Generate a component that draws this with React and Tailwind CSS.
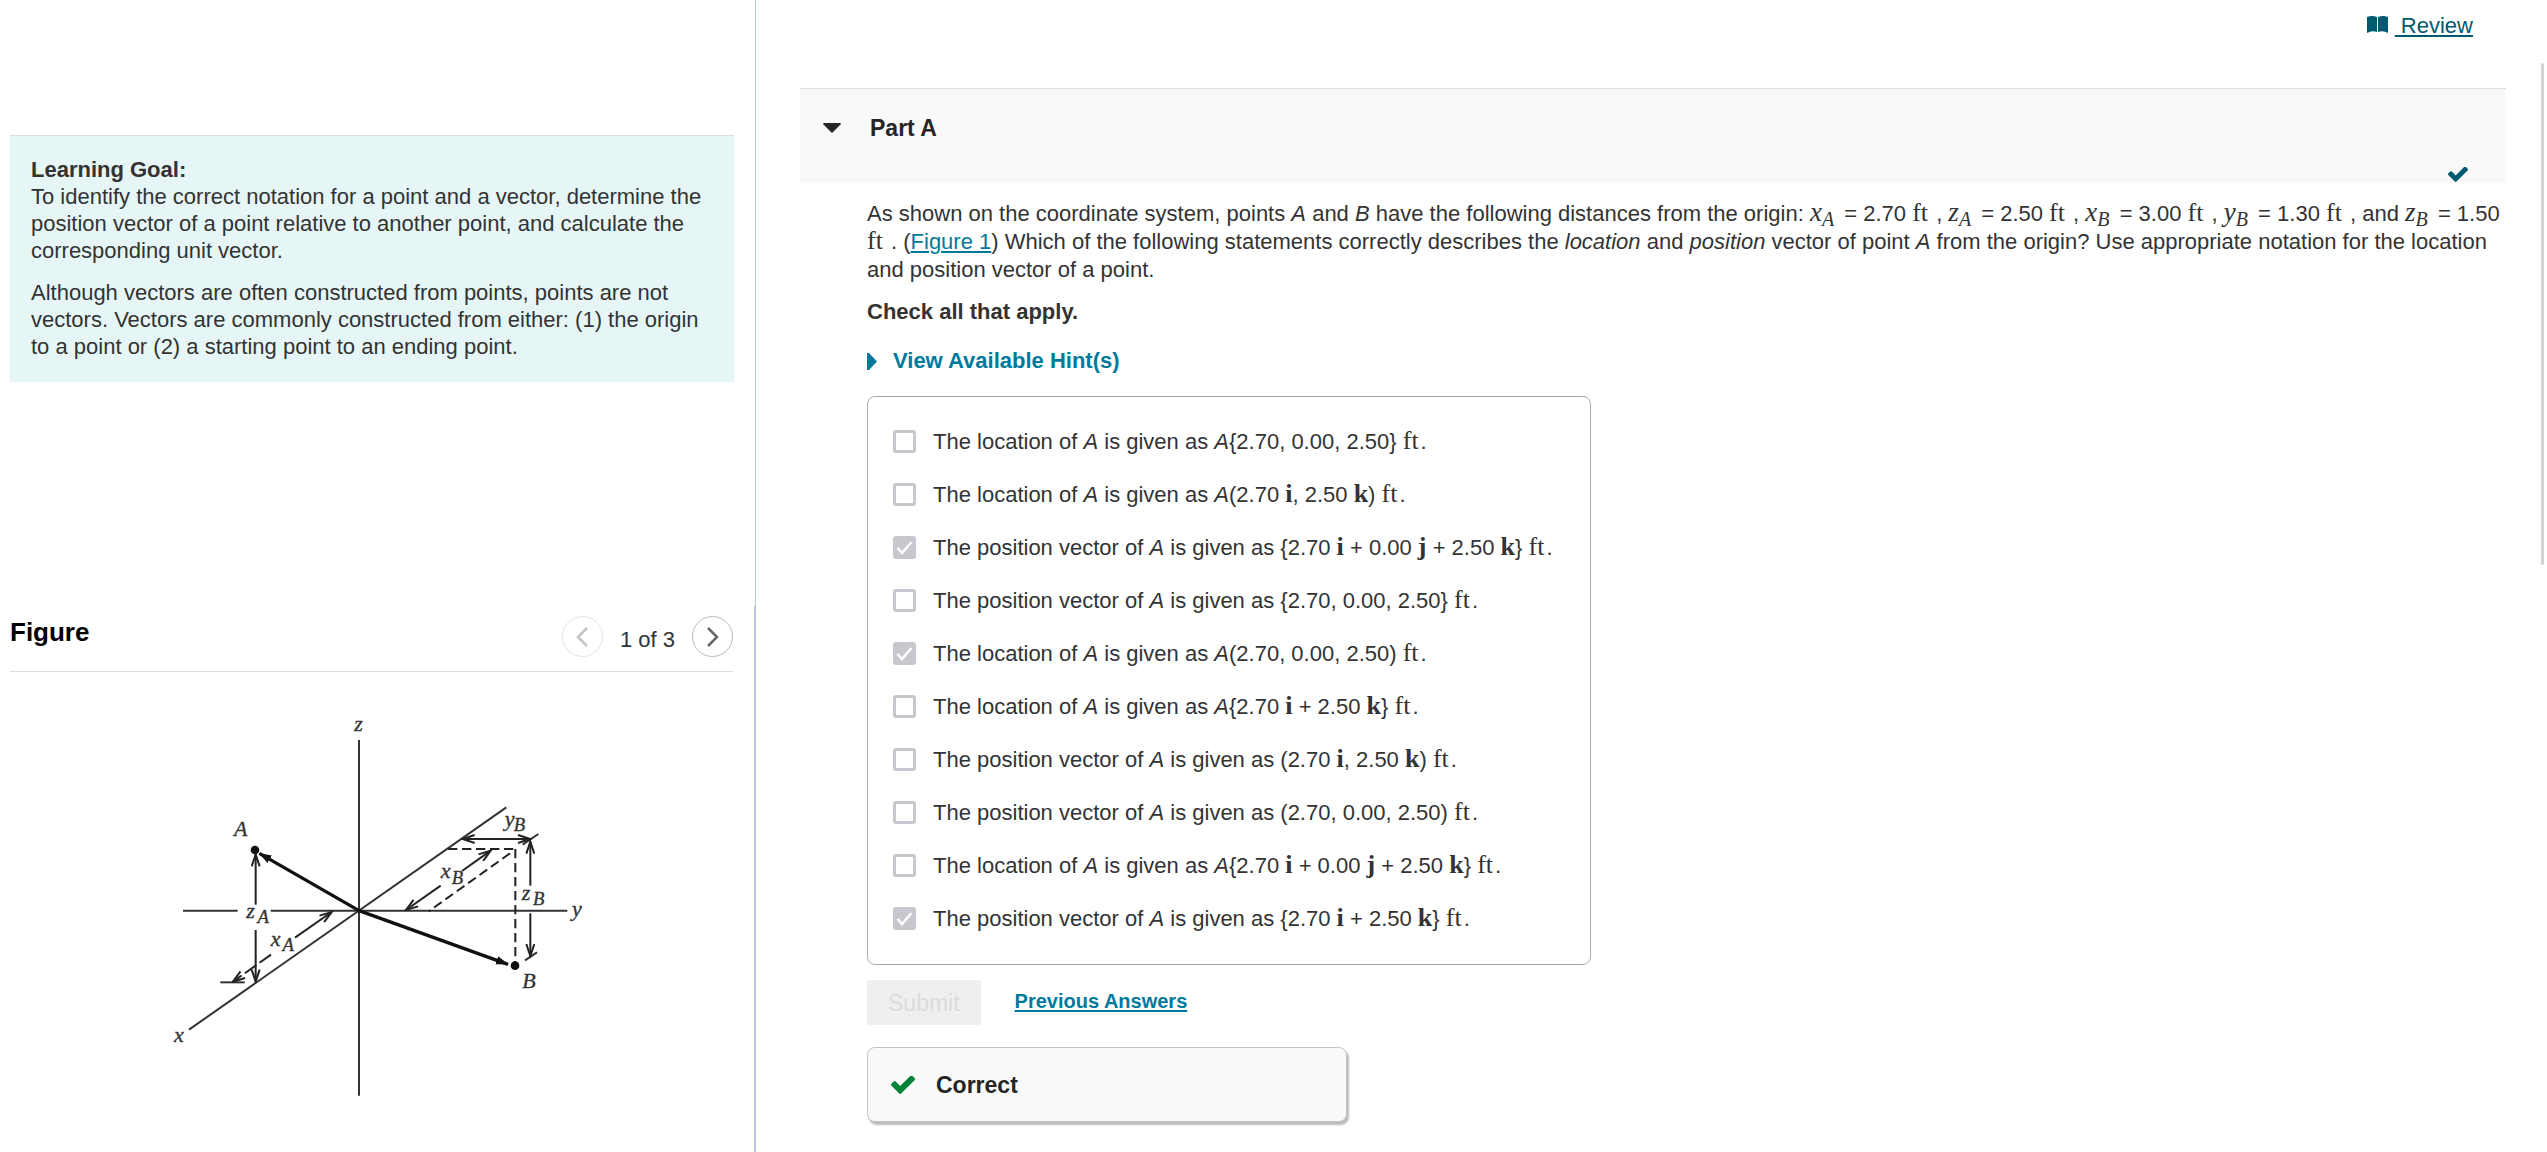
import React, { useState } from 'react';

const A = <i>A</i>;

// Unit and vector symbols are set in a serif face, as in typeset maths
const Ft = () => <span className="font-['Liberation_Serif',serif] text-[26px] leading-none mr-[2px]">ft</span>;

const Vec = ({ children }) => (
  <b className="font-['Liberation_Serif',serif] text-[26px] leading-none">{children}</b>
);

const Var = ({ name, sub }) => (
  <i className="font-['Liberation_Serif',serif] text-[27px] leading-none whitespace-nowrap mr-[4px]">
    {name}
    <sub className="text-[20px] leading-none">{sub}</sub>
  </i>
);

const options = [
  { id: 'a', checked: false, text: <>The location of {A} is given as {A}{'{2.70, 0.00, 2.50}'} <Ft />.</> },
  { id: 'b', checked: false, text: <>The location of {A} is given as {A}(2.70 <Vec>i</Vec>, 2.50 <Vec>k</Vec>) <Ft />.</> },
  { id: 'c', checked: true, text: <>The position vector of {A} is given as {'{'}2.70 <Vec>i</Vec> + 0.00 <Vec>j</Vec> + 2.50 <Vec>k</Vec>{'}'} <Ft />.</> },
  { id: 'd', checked: false, text: <>The position vector of {A} is given as {'{2.70, 0.00, 2.50}'} <Ft />.</> },
  { id: 'e', checked: true, text: <>The location of {A} is given as {A}(2.70, 0.00, 2.50) <Ft />.</> },
  { id: 'f', checked: false, text: <>The location of {A} is given as {A}{'{'}2.70 <Vec>i</Vec> + 2.50 <Vec>k</Vec>{'}'} <Ft />.</> },
  { id: 'g', checked: false, text: <>The position vector of {A} is given as (2.70 <Vec>i</Vec>, 2.50 <Vec>k</Vec>) <Ft />.</> },
  { id: 'h', checked: false, text: <>The position vector of {A} is given as (2.70, 0.00, 2.50) <Ft />.</> },
  { id: 'i', checked: false, text: <>The location of {A} is given as {A}{'{'}2.70 <Vec>i</Vec> + 0.00 <Vec>j</Vec> + 2.50 <Vec>k</Vec>{'}'} <Ft />.</> },
  { id: 'j', checked: true, text: <>The position vector of {A} is given as {'{'}2.70 <Vec>i</Vec> + 2.50 <Vec>k</Vec>{'}'} <Ft />.</> },
];

function CheckMark({ className, label }) {
  return (
    <svg viewBox="121 374 1550 1148" className={className} fill="currentColor" role="img" aria-label={label}>
      <path d="M1671 566q0 40-28 68l-724 724-136 136q-28 28-68 28t-68-28l-136-136-362-362q-28-28-28-68t28-68l136-136q28-28 68-28t68 28l294 295 656-657q28-28 68-28t68 28l136 136q28 28 28 68z" />
    </svg>
  );
}

function CoordinateFigure() {
  return (
    <svg viewBox="-24 0 1320 1230" className="w-[440px] max-w-full mx-auto" role="img" aria-label="Coordinate system with points A and B">
      <defs>
        <marker id="open" markerUnits="userSpaceOnUse" markerWidth="44" markerHeight="30" refX="38" refY="15" orient="auto-start-reverse">
          <path d="M2 3 L38 15 L2 27" fill="none" stroke="#222" strokeWidth="6" />
        </marker>
        <marker id="solid" markerUnits="userSpaceOnUse" markerWidth="40" markerHeight="28" refX="36" refY="14" orient="auto">
          <path d="M0 1 L38 14 L0 27 Z" fill="#111" />
        </marker>
      </defs>

      <g stroke="#333" strokeWidth="6" fill="none">
        <path d="M597 123 V1190" />
        <path d="M69 635 H233 M332 635 H1222" />
        <path d="M87 992 L1039 325" />
        <path d="M181 850 H254" />
        <path d="M1095 784 L1131 760 M1088 437 L1135 405" />
      </g>

      <g stroke="#222" strokeWidth="6" fill="none" strokeDasharray="28 14">
        <path d="M864 450 H1066" />
        <path d="M1066 450 V800" />
        <path d="M1050 463 L806 637" />
      </g>

      <g stroke="#222" strokeWidth="6" fill="none">
        <path d="M287 617 V466" markerEnd="url(#open)" />
        <path d="M287 693 V848" markerEnd="url(#open)" />
        <path d="M405 716 L515 639" markerEnd="url(#open)" />
        <path d="M333 767 L219 848" strokeDasharray="42 12" markerEnd="url(#open)" />
        <path d="M906 516 L992 455" markerEnd="url(#open)" />
        <path d="M842 560 L738 633" markerEnd="url(#open)" />
        <path d="M908 420 H1110" markerStart="url(#open)" markerEnd="url(#open)" />
        <path d="M1111 560 V428" markerEnd="url(#open)" />
        <path d="M1111 643 V771" markerEnd="url(#open)" />
      </g>

      <g stroke="#111" strokeWidth="10" fill="none">
        <path d="M597 635 L298 463" markerEnd="url(#solid)" />
        <path d="M597 635 L1044 796" markerEnd="url(#solid)" />
      </g>
      <circle cx="285" cy="453" r="13" fill="#111" />
      <circle cx="1065" cy="800" r="13" fill="#111" />

      <g className="font-['Liberation_Serif',serif]" fontStyle="italic" fontSize="66" fill="#333" stroke="#333" strokeWidth="1">
        <text x="583" y="95">z</text>
        <text x="222" y="411">A</text>
        <text x="1087" y="867">B</text>
        <text x="1236" y="652">y</text>
        <text x="42" y="1029">x</text>
        <text x="259" y="657">z<tspan dx="8" dy="16" fontSize="56">A</tspan></text>
        <text x="332" y="741">x<tspan dx="6" dy="16" fontSize="56">A</tspan></text>
        <text x="842" y="538">x<tspan dx="4" dy="18" fontSize="56">B</tspan></text>
        <text x="1034" y="380">y<tspan dx="-2" dy="16" fontSize="56">B</tspan></text>
        <text x="1085" y="604">z<tspan dx="8" dy="14" fontSize="56">B</tspan></text>
      </g>
    </svg>
  );
}

function GoalPanel() {
  return (
    <section className="border-r border-[#b7c9dc] pl-[10px] pr-[21px] pt-[135px] pb-[224px]">
      <div className="bg-[#e6f6f6] border-t border-[#dcdcdc] px-[21px] pt-[20px] pb-[22px] text-[22px] leading-[27px] text-[#333]">
        <h2 className="font-bold">Learning Goal:</h2>
        <p>
          To identify the correct notation for a point and a vector, determine the position vector of a point
          relative to another point, and calculate the corresponding unit vector.
        </p>
        <p className="mt-[15px]">
          Although vectors are often constructed from points, points are not vectors. Vectors are commonly
          constructed from either: (1) the origin to a point or (2) a starting point to an ending point.
        </p>
      </div>
    </section>
  );
}

function FigurePanel() {
  return (
    <section className="grow border-r-2 border-[#b7c9dc] pl-[10px] pr-[21px] pt-[10px]">
      <div className="flex items-start justify-between border-b border-[#ddd] pb-[14px]">
        <h2 className="text-[26px] leading-8 font-bold text-black">Figure</h2>
        <div className="flex items-center gap-[17px] text-[22px] text-[#333]">
          <button type="button" disabled aria-label="Previous figure" className="grid place-items-center size-[41px] rounded-full border border-[#e4e4e4] text-[#c4c4c4]">
            <svg viewBox="0 0 12 20" className="w-3 h-5" fill="none" stroke="currentColor" strokeWidth="2.5"><path d="M11 1 L2 10 L11 19" /></svg>
          </button>
          <span className="pt-[5px]">1 of 3</span>
          <button type="button" aria-label="Next figure" className="grid place-items-center size-[41px] rounded-full border border-[#bbb] text-[#666]">
            <svg viewBox="0 0 12 20" className="w-3 h-5" fill="none" stroke="currentColor" strokeWidth="2.5"><path d="M1 1 L10 10 L1 19" /></svg>
          </button>
        </div>
      </div>
      <div className="flex pt-[27px]">
        <CoordinateFigure />
      </div>
    </section>
  );
}

function Option({ option }) {
  const [checked] = useState(option.checked);

  return (
    <li className="flex items-center gap-[17px] h-[53px]">
      <span className="grid shrink-0">
        <input
          type="checkbox"
          id={'option-' + option.id}
          checked={checked}
          disabled
          readOnly
          className="col-start-1 row-start-1 appearance-none size-[23px] rounded-[3px] border-3 border-[#c7c7cd] bg-white checked:bg-[#c7c7cd]"
        />
        {checked && (
          <svg viewBox="0 0 23 23" className="col-start-1 row-start-1 size-[23px] pointer-events-none" fill="none" stroke="#fff" strokeWidth="2.6">
            <path d="M4.5 12 L9 17 L18.500 6" />
          </svg>
        )}
      </span>
      <label htmlFor={'option-' + option.id} className="whitespace-nowrap">{option.text}</label>
    </li>
  );
}

function PartA() {
  return (
    <main className="grow min-w-0 pt-[25px]">
      <header className="flex justify-between h-[95px] bg-[#f9f9f9] border-t border-[#ddd]">
        <button type="button" className="flex items-center self-start gap-[29px] pl-[23px] pt-[23px] text-[23px] leading-8 font-bold text-[#252525]">
          <svg viewBox="0 0 18 10" className="w-[18px] h-[10px]" fill="#252525"><path d="M0 1 Q0 0 1 0 H17 Q18 0 18 1 L9 10 Z" /></svg>
          Part A
        </button>
        <CheckMark className="self-end mr-[38px] mb-px w-[20px] h-[15px] text-[#005a70]" label="Completed" />
      </header>

      <div className="pl-[67px] pt-[16px] text-[22px] leading-[28px] text-[#333]">
        <p>
          As shown on the coordinate system, points {A} and <i>B</i> have the following distances from the
          origin: <Var name="x" sub="A" /> = 2.70 <Ft /> , <Var name="z" sub="A" /> = 2.50 <Ft /> , <Var name="x" sub="B" /> = 3.00 <Ft /> , <Var name="y" sub="B" /> = 1.30 <Ft /> , and <Var name="z" sub="B" /> = 1.50 <Ft /> . (<a href="#figure" className="text-[#007a9c] underline decoration-2 underline-offset-2">Figure 1</a>)
          Which of the following statements correctly describes the <i>location</i> and <i>position</i> vector of
          point {A} from the origin? Use appropriate notation for the location and position vector of a point.
        </p>
        <p className="mt-[14px] font-bold">Check all that apply.</p>
        <button type="button" className="flex items-center gap-4 mt-[21px] font-bold text-[#007a9c]">
          <svg viewBox="0 0 10 17" className="w-[10px] h-[17px]" fill="currentColor"><path d="M0 0 H2 L10 8.500 L2 17 H0 Z" /></svg>
          View Available Hint(s)
        </button>

        <ul className="w-fit mt-[21px] pl-[25px] pr-[37px] pt-[18px] pb-[19px] rounded-lg border border-[#a9a9a9]">
          {options.map(option => <Option key={option.id} option={option} />)}
        </ul>

        <div className="flex items-start gap-[34px] mt-[15px]">
          <button type="button" disabled className="px-[21px] h-[45px] rounded-[3px] bg-[#efefef] text-[23px] text-[#dcdcdc]">Submit</button>
          <a href="#previous" className="mt-[7px] text-[20px] font-bold text-[#007a9c] underline decoration-2 underline-offset-2">Previous Answers</a>
        </div>

        <div className="flex items-center gap-[21px] w-[480px] h-[75px] mt-[22px] pl-[23px] rounded-lg border border-[#c4c4c4] bg-[#f9f9f9] shadow-[2px_3px_2px_#bbb]">
          <CheckMark className="w-[24px] h-[18px] text-[#038238]" label="Correct answer" />
          <strong className="text-[23px] text-[#252525]">Correct</strong>
        </div>
      </div>
    </main>
  );
}

export default function App() {
  return (
    <div className="grid grid-cols-[756fr_1791fr] min-h-screen bg-white font-['Liberation_Sans',Arial,sans-serif]">
      <aside className="flex flex-col">
        <GoalPanel />
        <FigurePanel />
      </aside>

      <div className="flex flex-col min-w-0">
        <nav className="flex justify-end h-[63px] pt-[12px] pr-[74px] text-[22px] leading-[27px] text-[#005a70]">
          <a href="#review" className="flex items-start gap-[7px]">
            <svg viewBox="0 0 21 17" className="w-[21px] h-[17px] mt-1" fill="currentColor">
              <path d="M0 1 Q5 -1 10 1 V16 Q5 14 0 17 Z" />
              <path d="M11 1 Q16 -1 21 1 V17 Q16 14 11 16 Z" />
            </svg>
            <span className="underline decoration-2 underline-offset-2">&nbsp;Review</span>
          </a>
        </nav>
        <div className="flex items-start gap-[35px] pl-[44px] pr-[3px]">
          <PartA />
          <div className="shrink-0 w-[3px] h-[502px] rounded-full bg-[#d4d4d4]" />
        </div>
      </div>
    </div>
  );
}
